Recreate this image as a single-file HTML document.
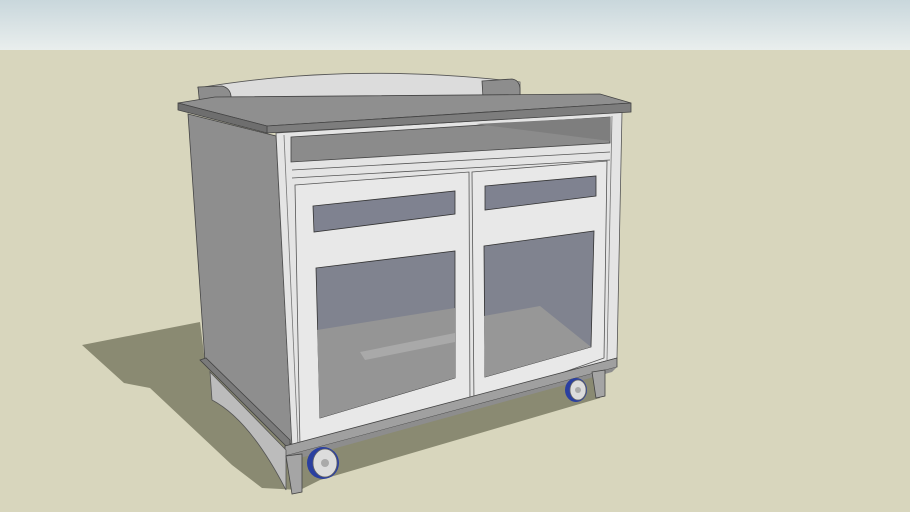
<!DOCTYPE html>
<html><head><style>
html,body{margin:0;padding:0;width:910px;height:512px;overflow:hidden;background:#d8d6bd}
</style></head><body>
<svg width="910" height="512" viewBox="0 0 910 512" xmlns="http://www.w3.org/2000/svg">
<defs>
<linearGradient id="sky" x1="0" y1="0" x2="0" y2="1">
<stop offset="0" stop-color="#c9d7dc"/><stop offset="1" stop-color="#e9eeed"/>
</linearGradient>
</defs>
<rect width="910" height="512" fill="#d8d6bd"/>
<rect width="910" height="50" fill="url(#sky)"/>
<polygon points="82,345 200,322 205,362 292,452 300,490 262,488 232,465 150,388 124,383" fill="#8a8a72"/>
<polygon points="292,452 605,372 600,398 320,480 300,490" fill="#8a8a72"/>
<path d="M198,88 Q350,62 520,82 L520,96 L230,104 Z" fill="#dcdcdc" stroke="#555" stroke-width="0.8"/>
<path d="M198,87 L222,86 Q230,88 231,96 L231,107 L200,107 Z" fill="#8d8d8d" stroke="#444" stroke-width="0.8"/>
<path d="M482,81 L512,79 Q519,80 520,88 L520,97 L483,98 Z" fill="#8d8d8d" stroke="#444" stroke-width="0.8"/>
<polygon points="188,114 276,136 292,445 205,362" fill="#8e8e8e" stroke="#444" stroke-width="0.8"/>
<polygon points="276,133 622,112 617,358 292,447" fill="#e4e4e4" stroke="#555" stroke-width="0.8"/>
<line x1="284" y1="135" x2="298" y2="445" stroke="#777" stroke-width="0.8"/>
<line x1="612" y1="116" x2="607" y2="360" stroke="#777" stroke-width="0.8"/>
<polygon points="291,137 610,117 610,143 291,162" fill="#8b8b8b" stroke="#444" stroke-width="0.8"/>
<polygon points="476,124 610,117 610,141" fill="#7e7e7e"/>
<line x1="292" y1="170" x2="610" y2="152" stroke="#555" stroke-width="0.8"/>
<line x1="292" y1="178" x2="610" y2="160" stroke="#555" stroke-width="0.8"/>
<polygon points="295,185 469,172 470,408 300,447" fill="#e8e8e8" stroke="#555" stroke-width="0.8"/>
<polygon points="472,172 607,161 604,358 474,404" fill="#e8e8e8" stroke="#555" stroke-width="0.8"/>
<polygon points="313,206 455,191 455,214 314,232" fill="#7f8290" stroke="#333" stroke-width="0.8"/>
<polygon points="485,186 596,176 596,196 485,210" fill="#7f8290" stroke="#333" stroke-width="0.8"/>
<polygon points="316,268 455,251 455,378 320,418" fill="#80838f" stroke="#333" stroke-width="0.8"/>
<polygon points="317,330 455,308 455,378 320,418" fill="#959595"/>
<polygon points="360,352 455,333 455,342 365,360" fill="#a9a9a9"/>
<polygon points="484,246 594,231 591,347 485,377" fill="#80838f" stroke="#333" stroke-width="0.8"/>
<polygon points="484,316 540,306 591,347 485,377" fill="#979797"/>
<polygon points="178,103 215,97 600,94 631,103 267,126" fill="#8f8f8f" stroke="#444" stroke-width="0.8"/>
<polygon points="267,126 631,103 631,112 267,133" fill="#7d7d7d" stroke="#444" stroke-width="0.8"/>
<polygon points="178,103 267,126 267,133 178,110" fill="#6e6e6e" stroke="#444" stroke-width="0.8"/>
<polygon points="200,360 206,358 290,440 290,450" fill="#7a7a7a" stroke="#444" stroke-width="0.8"/>
<polygon points="285,446 617,358 617,367 285,456" fill="#a0a0a0" stroke="#444" stroke-width="0.8"/>
<polygon points="285,456 617,367 612,372 300,458" fill="#8d8d8d"/>
<path d="M210,372 L286,450 L286,490 Q250,420 212,400 Z" fill="#bcbcbc" stroke="#555" stroke-width="0.8"/>
<polygon points="286,456 302,454 302,492 292,494" fill="#a5a5a5" stroke="#444" stroke-width="0.8"/>
<polygon points="592,372 605,370 605,396 596,398" fill="#a5a5a5" stroke="#444" stroke-width="0.8"/>
<ellipse cx="323" cy="463" rx="16" ry="16" fill="#2a3fa0"/>
<ellipse cx="325" cy="463" rx="12" ry="14" fill="#dcdcdc" stroke="#666" stroke-width="0.8"/>
<circle cx="325" cy="463" r="4" fill="#aaa"/>
<ellipse cx="576" cy="390" rx="11" ry="12" fill="#2a3fa0"/>
<ellipse cx="578" cy="390" rx="8" ry="10" fill="#dcdcdc" stroke="#666" stroke-width="0.8"/>
<circle cx="578" cy="390" r="3" fill="#aaa"/>
</svg>
</body></html>
